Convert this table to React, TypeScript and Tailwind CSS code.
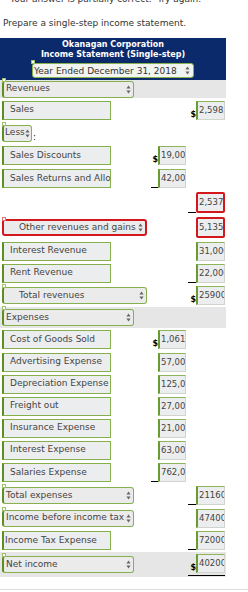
import React from 'react';

type CellData = { v: string; dollar?: boolean; under?: boolean; red?: boolean; double?: boolean };
type RowData = { h: string; gray?: boolean; label?: React.ReactNode; c1?: CellData; c2?: CellData };

function Arrows() {
  return (
    <svg width="5" height="9" viewBox="0 0 5 9" className="shrink-0">
      <path d="M2.5 0.5 L4.6 3.6 H0.4Z M2.5 8.5 L4.6 5.4 H0.4Z" fill="#666" />
    </svg>
  );
}

function Mark({ red }: { red?: boolean }) {
  return (
    <span
      className={`absolute -left-[2px] -top-[4px] h-[4px] w-[4px] border bg-white ${
        red ? 'border-[#e57373]' : 'border-[#9cc26a]'
      }`}
    />
  );
}

function Field({ text, indent = true }: { text: string; indent?: boolean }) {
  return (
    <div
      className={`relative flex h-[19px] w-[109px] items-center overflow-hidden whitespace-nowrap border border-l-2 border-[#86b04e] border-l-[#5b8f22] bg-[#ebedee] text-[9px] text-[#444] ${
        indent ? 'pl-[6px]' : 'pl-[1px]'
      }`}
    >
      <Mark />
      {text}
    </div>
  );
}

function Sel({ text, w, indent, red }: { text: string; w: string; indent?: boolean; red?: boolean }) {
  return (
    <div
      className={`relative flex h-[17px] items-center justify-between rounded-[3px] bg-[#ebebeb] pr-[2px] text-[9px] text-[#444] ${w} ${
        indent ? 'pl-[15px]' : 'pl-[2px]'
      } ${red ? 'border-2 border-[#d4161d]' : 'border border-l-2 border-[#86b04e] border-l-[#5b8f22]'}`}
    >
      <Mark red={red} />
      <span className="whitespace-nowrap">{text}</span>
      <Arrows />
    </div>
  );
}

function Less() {
  return (
    <div className="flex items-end">
      <div className="relative flex h-[17px] w-[30px] items-center justify-between rounded-[3px] border border-l-2 border-[#86b04e] border-l-[#5b8f22] bg-[#ebebeb] pl-[1px] pr-[1px] text-[9px] text-[#444]">
        <Mark />
        <span>Less</span>
        <Arrows />
      </div>
      <span className="pl-[1px] text-[9px] leading-[10px] text-[#222]">:</span>
    </div>
  );
}

function Cell({ d, wide }: { d?: CellData; wide?: boolean }) {
  if (!d) return null;
  const box = d.red
    ? 'h-[21px] border-2 border-[#d4161d] rounded-[2px] pl-[1px]'
    : 'h-[19px] border border-l-2 border-[#cfd4cc] border-l-[#6a9a30] border-t-[#8db55a] pl-[1px]';
  return (
    <div className={`flex items-end ${d.double ? 'border-b border-black pb-[2px]' : ''}`}>
      <div
        className={`flex items-end justify-end pb-[1px] text-[8px] font-bold leading-[8px] text-black ${
          wide ? 'w-[8px]' : 'w-[7px]'
        } ${d.under ? 'border-b border-black' : ''} ${d.red ? 'h-[21px]' : 'h-[19px]'}`}
      >
        {d.dollar ? '$' : ''}
      </div>
      <div
        className={`relative flex items-center overflow-hidden whitespace-nowrap bg-[#ebedee] text-[8.5px] text-[#444] ${box} ${
          wide ? 'w-[29px]' : 'w-[28px]'
        }`}
      >
        <Mark red={d.red} />
        {d.v}
      </div>
    </div>
  );
}

const rows: RowData[] = [
  { h: 'h-[18px]', gray: true, label: <Sel text="Revenues" w="w-[132px]" /> },
  { h: 'h-[24px]', label: <Field text="Sales" />, c2: { v: '2,598,000', dollar: true } },
  { h: 'h-[22px]', label: <Less /> },
  { h: 'h-[23px]', label: <Field text="Sales Discounts" />, c1: { v: '19,000', dollar: true } },
  { h: 'h-[23px]', label: <Field text="Sales Returns and Allowances" />, c1: { v: '42,000', under: true } },
  { h: 'h-[25px]', c2: { v: '2,537,000', red: true, under: true } },
  { h: 'h-[25px]', label: <Sel text="Other revenues and gains" w="w-[145px]" indent red />, c2: { v: '5,135,000', red: true } },
  { h: 'h-[22px]', label: <Field text="Interest Revenue" />, c2: { v: '31,000' } },
  { h: 'h-[22px]', label: <Field text="Rent Revenue" />, c2: { v: '22,000', under: true } },
  { h: 'h-[23px]', label: <Sel text="Total revenues" w="w-[145px]" indent />, c2: { v: '2590000', dollar: true } },
  { h: 'h-[21px]', gray: true, label: <Sel text="Expenses" w="w-[132px]" /> },
  { h: 'h-[23px]', label: <Field text="Cost of Goods Sold" />, c1: { v: '1,061,000', dollar: true } },
  { h: 'h-[22px]', label: <Field text="Advertising Expense" />, c1: { v: '57,000' } },
  { h: 'h-[22px]', label: <Field text="Depreciation Expense" />, c1: { v: '125,000' } },
  { h: 'h-[22px]', label: <Field text="Freight out" />, c1: { v: '27,000' } },
  { h: 'h-[22px]', label: <Field text="Insurance Expense" />, c1: { v: '21,000' } },
  { h: 'h-[22px]', label: <Field text="Interest Expense" />, c1: { v: '63,000' } },
  { h: 'h-[23px]', label: <Field text="Salaries Expense" />, c1: { v: '762,000', under: true } },
  { h: 'h-[23px]', label: <Sel text="Total expenses" w="w-[132px]" />, c2: { v: '2116000', under: true } },
  { h: 'h-[22px]', label: <Sel text="Income before income tax" w="w-[132px]" />, c2: { v: '474000' } },
  { h: 'h-[23px]', label: <Field text="Income Tax Expense" indent={false} />, c2: { v: '720000', under: true } },
  { h: 'h-[25px]', gray: true, label: <Sel text="Net income" w="w-[132px]" />, c2: { v: '402000', dollar: true, double: true } },
];

export default function App() {
  return (
    <div className="h-[592px] w-[248px] overflow-hidden bg-white font-['DejaVu_Sans',Verdana,sans-serif] text-[#333]">
      <p className="-mt-[6px] whitespace-nowrap pl-[10px] text-[9px] leading-[10px]">
        Your answer is partially correct.&nbsp; Try again.
      </p>
      <p className="mt-[14px] whitespace-nowrap pl-[3px] text-[9px] leading-[10px]">
        Prepare a single-step income statement.
      </p>

      <div className="mt-[10px] w-[226px]">
        {/* Heading */}
        <div className="bg-[#0b2a6c] pb-[2px] pt-[2px] text-center text-[8px] font-bold leading-[10px] text-white">
          <div>Okanagan Corporation</div>
          <div>Income Statement (Single-step)</div>
          <div className="relative mx-auto mt-[3px] flex h-[15px] w-[162px] items-center justify-between rounded-[3px] border border-[#86b04e] bg-[#f2f4f0] pl-[1px] pr-[3px] text-left text-[9px] font-normal text-[#333]">
            <Mark />
            <span className="whitespace-nowrap">Year Ended December 31, 2018</span>
            <Arrows />
          </div>
        </div>

        {/* Statement rows */}
        {rows.map((r, i) => (
          <div key={i} className={`flex items-center ${r.h} ${r.gray ? 'bg-[#e6e6e6]' : ''}`}>
            <div className="flex w-[151px] items-center pl-[2px]">{r.label}</div>
            <div className="flex w-[37px] items-center">
              <Cell d={r.c1} />
            </div>
            <div className="flex w-[38px] items-center">
              <Cell d={r.c2} wide />
            </div>
          </div>
        ))}
      </div>

      <div className="mt-[12px] h-px w-full bg-[#d9dee3]" />
    </div>
  );
}
